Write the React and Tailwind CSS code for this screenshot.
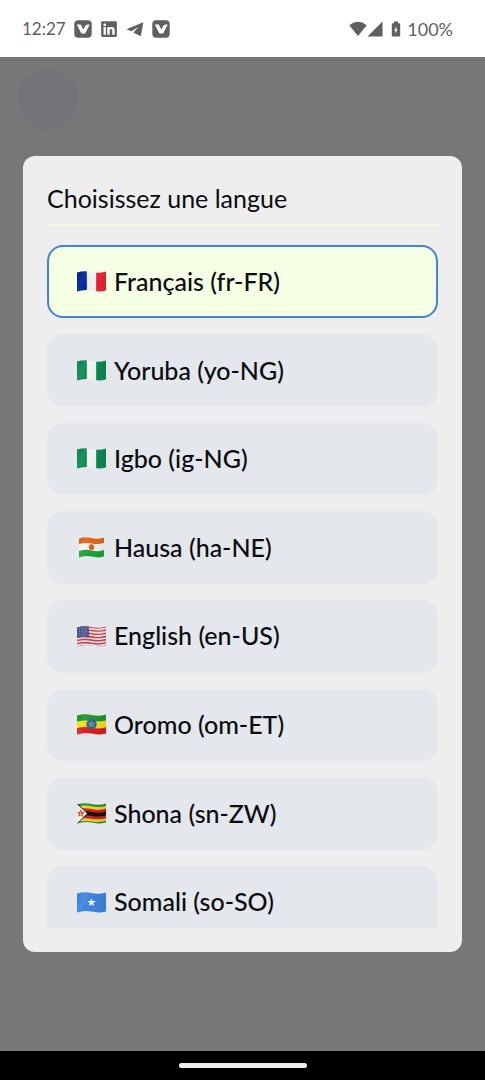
import React from 'react'
import { FaLinkedin } from 'react-icons/fa'

const languages = [
  { code: 'fr-FR', name: 'Français' },
  { code: 'yo-NG', name: 'Yoruba' },
  { code: 'ig-NG', name: 'Igbo' },
  { code: 'ha-NE', name: 'Hausa' },
  { code: 'en-US', name: 'English' },
  { code: 'om-ET', name: 'Oromo' },
  { code: 'sn-ZW', name: 'Shona' },
  { code: 'so-SO', name: 'Somali' },
]

const wave = 'M0 1.5 Q7 -0.8 14 1 T28 0.5 V19.5 Q21 21.2 14 19.6 T0 20.5Z'

// horizontal band that follows the wave of the flag
function Band({ y, h, fill }) {
  return <path fill={fill} d={`M0 ${y + 1} q7 -2.3 14 -0.5 t14 -0.5 v${h} q-7 1.8 -14 0.5 t-14 0.5z`} />
}

function FlagArt({ country }) {
  if (country === 'FR') {
    return (
      <>
        <path fill="#f4f6f8" d="M0 0h28v21H0z" />
        <path fill="#00239c" d="M0 0h9.5v21H0z" />
        <path fill="#f02438" d="M18.5 0H28v21h-9.5z" />
      </>
    )
  }
  if (country === 'NG') {
    return (
      <>
        <path fill="#f4f6f8" d="M0 0h28v21H0z" />
        <path fill="#0d8b56" d="M0 0h9.5v21H0zM18.5 0H28v21h-9.5z" />
      </>
    )
  }
  if (country === 'NE') {
    return (
      <>
        <path fill="#f4f6f8" d="M0 0h28v21H0z" />
        <Band y={-1} h={7} fill="#e0661a" />
        <Band y={13} h={9} fill="#1fa63c" />
        <circle cx="14" cy="10.3" r="3" fill="#e0661a" />
      </>
    )
  }
  if (country === 'US') {
    return (
      <>
        <path fill="#f5eeee" d="M0 0h28v21H0z" />
        {[0, 3.2, 6.4, 9.6, 12.8, 16, 19.2].map((y) => (
          <Band key={y} y={y} h={1.6} fill="#cf4250" />
        ))}
        <path fill="#4c568f" d="M0 0h11.5v11.4Q6 10.5 0 12z" />
        <g fill="#a3a9ca">
          {[3, 5.5, 8].map((y) => (
            <React.Fragment key={y}>
              <circle cx="2.5" cy={y} r="0.5" />
              <circle cx="5.5" cy={y} r="0.5" />
              <circle cx="8.5" cy={y} r="0.5" />
            </React.Fragment>
          ))}
        </g>
      </>
    )
  }
  if (country === 'ET') {
    return (
      <>
        <path fill="#f9e016" d="M0 0h28v21H0z" />
        <Band y={-1} h={7.5} fill="#1d963b" />
        <Band y={13.3} h={9} fill="#e01c28" />
        <circle cx="14" cy="10.3" r="5" fill="#2865a8" />
        <path stroke="#a9ad5c" strokeWidth="0.6" fill="none" d="M14 7.2l2 5.6-4.8-3.4h5.6l-4.8 3.4z" />
      </>
    )
  }
  if (country === 'ZW') {
    return (
      <>
        <path fill="#24913a" d="M0 0h28v21H0z" />
        <Band y={2.8} h={15.2} fill="#f5d522" />
        <Band y={5.6} h={9.6} fill="#d5202c" />
        <Band y={8.4} h={4} fill="#17100f" />
        <path fill="#17100f" d="M0 0L11 10.5 0 21z" />
        <path fill="#f2f1ed" d="M0 1L9.8 10.5 0 20.2z" />
        <path fill="#d5202c" d="M3.6 6l1 2.9 3 .1-2.4 1.9.9 3-2.6-1.7-2.4 1.7.9-3-1.8-1.9 2.4-.1z" />
        <path fill="#edb638" d="M2.5 8.4l1.7.7.3 3.6H2.8z" />
      </>
    )
  }
  return (
    <>
      <path fill="#3f86e0" d="M0 0h28v21H0z" />
      <path fill="#fff" d="M14 6.2l1 2.9 3.2.1-2.5 1.9.9 3-2.6-1.8-2.6 1.8.9-3-2.5-1.9 3.2-.1z" />
    </>
  )
}

function Flag({ code }) {
  const country = code.slice(3)
  return (
    <svg
      viewBox="0 0 28 21"
      preserveAspectRatio="none"
      className={country === 'NE' ? 'h-[21px] w-[25px]' : 'h-[21px] w-[29px]'}
      aria-hidden="true"
    >
      <defs>
        <clipPath id={`wave-${code}`}>
          <path d={wave} />
        </clipPath>
        <linearGradient id={`shade-${code}`} x1="0" x2="1" y1="0" y2="0.3">
          <stop offset="0" stopColor="#000" stopOpacity="0.04" />
          <stop offset="0.3" stopColor="#fff" stopOpacity="0.06" />
          <stop offset="0.65" stopColor="#000" stopOpacity="0.02" />
          <stop offset="1" stopColor="#000" stopOpacity="0.08" />
        </linearGradient>
      </defs>
      <g clipPath={`url(#wave-${code})`}>
        <FlagArt country={country} />
        <path fill={`url(#shade-${code})`} d="M0 0h28v21H0z" />
      </g>
    </svg>
  )
}

function CheckBadge() {
  return (
    <svg viewBox="0 0 18 18" className="size-[18px]" aria-hidden="true">
      <rect x="0.3" y="0.3" width="17.4" height="17.4" rx="4" fill="#5f5f5f" />
      <path d="M2.8 4.6h4l2.5 5 1.6-3.2q1-1.8 2.8-1.8h2L11.2 13.6H7.4z" fill="#fff" />
    </svg>
  )
}

function StatusBar() {
  return (
    <header className="flex h-[57px] shrink-0 items-center justify-between bg-white pr-8 pl-[22px] text-[#5f5f5f]">
      <div className="flex items-center gap-2 text-[17px]">
        <span>12:27</span>
        <CheckBadge />
        <FaLinkedin className="size-[18px]" />
        <svg viewBox="0 0 18 18" className="size-[18px]" aria-hidden="true">
          <path d="M17.4 2.2L0.4 9.3l5 2L12.5 7l-5.1 5.6 7.4 3.6z" fill="currentColor" />
        </svg>
        <CheckBadge />
      </div>
      <div className="flex items-center text-lg">
        <svg viewBox="0 0 18 16" className="h-4 w-[18px]" aria-hidden="true">
          <path d="M0.3 4.2Q9-2.5 17.7 4.2L9 15z" fill="currentColor" />
        </svg>
        <svg viewBox="0 0 16 16" className="size-4" aria-hidden="true">
          <path d="M15.5 0.5v15H0.5z" fill="currentColor" />
        </svg>
        <svg viewBox="0 0 10 16" className="mr-[6px] ml-2 h-4 w-[10px]" aria-hidden="true">
          <path d="M3 0.5h4v1.7h1.2q1 0 1 1v11.3q0 1-1 1H1.8q-1 0-1-1V3.2q0-1 1-1H3z" fill="currentColor" />
          <path d="M5.2 5L3.4 9.4h1v3.2l2.2-4.4H5.2z" fill="#fff" />
        </svg>
        <span>100%</span>
      </div>
    </header>
  )
}

export default function App() {
  const [selected, setSelected] = React.useState('fr-FR')

  return (
    <div className="flex h-screen flex-col overflow-hidden bg-[#777777] font-['Lato','Noto_Sans',sans-serif]">
      <StatusBar />

      <main className="relative min-h-0 flex-1 px-[18px] py-3">
        <div className="size-[60px] rounded-full bg-[#727477]" />

        <div className="absolute inset-0 flex items-center justify-center px-[23px]">
          <section
            role="dialog"
            aria-labelledby="language-title"
            className="flex h-4/5 w-full flex-col rounded-xl bg-[#eeeeee] p-6 text-[25px] text-[#0b0c10]"
          >
            <h1 id="language-title" className="border-b-2 border-[#f5f8e4] pb-2 leading-9">
              Choisissez une langue
            </h1>
            <div className="mt-[19px] min-h-0 flex-1 overflow-hidden">
              <ul className="grid min-h-[693px] auto-rows-fr gap-4">
                {languages.map(({ code, name }) => (
                  <li key={code} className="flex">
                    <button
                      type="button"
                      aria-pressed={selected === code}
                      onClick={() => setSelected(code)}
                      className={`flex w-full items-center rounded-2xl border-2 px-7 font-medium ${
                        selected === code ? 'border-[#4681dd] bg-[#f4ffe3]' : 'border-[#e4e7eb] bg-[#e4e7eb]'
                      }`}
                    >
                      <span className="mr-2 flex w-[29px] shrink-0 items-center justify-center">
                        <Flag code={code} />
                      </span>
                      <span>
                        {name} ({code})
                      </span>
                    </button>
                  </li>
                ))}
              </ul>
            </div>
          </section>
        </div>
      </main>

      <footer className="flex h-[29px] shrink-0 items-center justify-center bg-black">
        <div className="h-[5px] w-32 rounded-full bg-[#eeeeee]" />
      </footer>
    </div>
  )
}
